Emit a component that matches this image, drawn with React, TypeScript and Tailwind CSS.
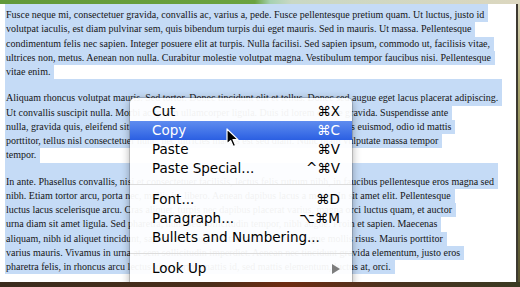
import React from 'react';

const paragraphs: string[][] = [
  [
    'Fusce neque mi, consectetuer gravida, convallis ac, varius a, pede. Fusce pellentesque pretium quam. Ut luctus, justo id',
    'volutpat iaculis, est diam pulvinar sem, quis bibendum turpis dui eget mauris. Sed in mauris. Ut massa. Pellentesque',
    'condimentum felis nec sapien. Integer posuere elit at turpis. Nulla facilisi. Sed sapien ipsum, commodo ut, facilisis vitae,',
    'ultrices non, metus. Aenean non nulla. Curabitur molestie volutpat magna. Vestibulum tempor faucibus nisi. Pellentesque',
    'vitae enim.',
  ],
  [
    'Aliquam rhoncus volutpat mauris. Sed tortor. Donec tincidunt elit et tellus. Donec sed augue eget lacus placerat adipiscing.',
    'Ut convallis suscipit nulla. Morbi ac ipsum ullamcorper ligula. Duis id lorem ornare gravida. Suspendisse ante',
    'nulla, gravida quis, eleifend sit amet, sodales at, velit. Vestibulum ante ipsum. Vivamus euismod, odio id mattis',
    'porttitor, tellus nisl consectetuer nunc, nec ultricies mauris est sed diam. Nunc diam vulputate massa tempor',
    'tempor.',
  ],
  [
    'In ante. Phasellus convallis, nisi et consectetuer facilisis, lectus felis rutrum nibh, in faucibus pellentesque eros magna sed',
    'nibh. Etiam tortor arcu, porta nec, mollis in, libero. Aenean dapibus lacus a metus. In sit amet elit. Pellentesque',
    'luctus lacus scelerisque arcu. Cras aliquet, turpis nec dapibus placerat varius, magna orci luctus quam, et auctor',
    'urna diam sit amet ligula. Sed pharetra, nunc sed sollicitudin tempor, nibh augue. Proin et sapien. Maecenas',
    'aliquam, nibh id aliquet tincidunt, sapien orci feugiat vitae tortor, eu nibh augue mollis risus. Mauris porttitor',
    'varius mauris. Vivamus in urna at sem sollicitudin imperdiet. Aenean nec tincidunt gravida elementum, justo eros',
    'pharetra felis, in rhoncus arcu lectus vitae tortor, mattis id, sed mattis elementum, luctus at, orci.',
  ],
];

type Item = { label: string; keys?: string; submenu?: boolean; active?: boolean } | 'sep';

const menu: Item[] = [
  { label: 'Cut', keys: '⌘X' },
  { label: 'Copy', keys: '⌘C', active: true },
  { label: 'Paste', keys: '⌘V' },
  { label: 'Paste Special...', keys: '^⌘V' },
  'sep',
  { label: 'Font...', keys: '⌘D' },
  { label: 'Paragraph...', keys: '⌥⌘M' },
  { label: 'Bullets and Numbering...' },
  'sep',
  { label: 'Look Up', submenu: true },
  { label: 'Synonyms', submenu: true },
  { label: 'Translate...' },
];

const Arrow = ({ white }: { white?: boolean }) => (
  <svg width="8" height="10" viewBox="0 0 8 10" className="shrink-0">
    <polygon points="0,0 8,5 0,10" fill={white ? '#ffffff' : '#7d7d7d'} />
  </svg>
);

const Cursor = () => (
  <svg width="13" height="20" viewBox="0 0 13 20" className="absolute left-[226px] top-[124px]">
    <path d="M1 1 L1 16 L4.6 12.6 L7.2 18.6 L9.6 17.6 L7 11.6 L12 11.6 Z" fill="#000" stroke="#fff" strokeWidth="1.2" strokeLinejoin="round" />
  </svg>
);

const ContextMenu = () => (
  <div className="absolute left-[130px] top-[94px] w-[222px] rounded-t-[5px] bg-white/[0.94] pt-[4px] shadow-[0_2px_10px_rgba(0,0,0,0.35)] ring-1 ring-black/15 font-['DejaVu_Sans',sans-serif] text-[13.5px] text-black">
    {menu.map((item, i) =>
      item === 'sep' ? (
        <div key={i} className="flex h-[12px] items-center">
          <div className="h-px w-full bg-[#dcdcdc]" />
        </div>
      ) : (
        <div
          key={i}
          className={`flex h-[19px] items-center justify-between pl-[22px] pr-[12px] ${
            item.active ? 'bg-gradient-to-b from-[#5f8cef] to-[#2b5fe2] text-white' : ''
          }`}
        >
          <span>{item.label}</span>
          {item.keys && <span>{item.keys}</span>}
          {item.submenu && <Arrow white={item.active} />}
        </div>
      ),
    )}
  </div>
);

export default function App() {
  return (
    <div className="flex h-[287px] w-[520px] flex-col overflow-hidden bg-[#3b2a1c]">
      <div className="h-[4px] w-full shrink-0 bg-[linear-gradient(to_right,#62993a_0%,#6aa23f_49%,#a6d1b2_52%,#c9d8c4_56%,#dcd7bf_100%)]" />
      <div className="flex h-[278px] shrink-0">
        <div className="relative h-full w-[516px] overflow-hidden bg-white pl-[5px] font-['Liberation_Serif',serif] text-[10px] leading-[14.25px] text-[#161616]">
          {paragraphs.map((lines, p) => (
            <div key={p}>
              {lines.map((line, l) => (
                <div
                  key={l}
                  className={`w-fit whitespace-nowrap bg-[#c5dbf6] pl-[1px] pr-[4px] ${
                    l === 0 ? (p === 0 ? 'pt-[4px]' : 'pt-[12px]') : ''
                  }`}
                >
                  {line}
                </div>
              ))}
            </div>
          ))}
          <ContextMenu />
          <Cursor />
        </div>
        <div className="h-full w-[4px] border-l-2 border-[#3d3a30] bg-[linear-gradient(to_bottom,#d9d4b8_0%,#a8a46e_30%,#7c7c48_60%,#55502e_100%)]" />
      </div>
      <div className="h-[5px] w-full shrink-0 bg-[linear-gradient(to_right,#3a2c1e_0%,#4a2e1a_40%,#6e2c12_55%,#4a3320_75%,#3a3a22_100%)]" />
    </div>
  );
}
